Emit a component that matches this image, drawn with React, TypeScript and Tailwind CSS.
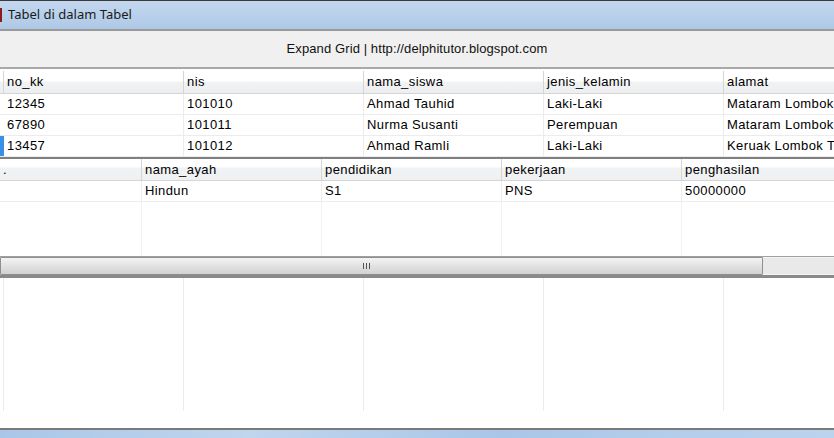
import React from "react";

// ===== Data =====
const masterCols = ["no_kk", "nis", "nama_siswa", "jenis_kelamin", "alamat"];
const masterRows = [
  ["12345", "101010", "Ahmad Tauhid", "Laki-Laki", "Mataram Lombok"],
  ["67890", "101011", "Nurma Susanti", "Perempuan", "Mataram Lombok"],
  ["13457", "101012", "Ahmad Ramli", "Laki-Laki", "Keruak Lombok Timur"],
];
const detailCols = ["nama_ayah", "pendidikan", "pekerjaan", "penghasilan"];
const detailRows = [["Hindun", "S1", "PNS", "50000000"]];

const font = "font-['Liberation_Sans',Arial,sans-serif]";

function HeaderCell({ text, w }: { text: string; w: string }) {
  return (
    <div
      className={`${w} shrink-0 h-full border-r border-[#d5d5d5] pl-[3px] flex items-center whitespace-nowrap overflow-hidden`}
    >
      {text}
    </div>
  );
}

function Cell({ text, w }: { text: string; w: string }) {
  return (
    <div
      className={`${w} shrink-0 h-full border-r border-[#ececec] pl-[3px] flex items-center whitespace-nowrap overflow-hidden`}
    >
      {text}
    </div>
  );
}

export default function App() {
  return (
    <div
      className={`w-[834px] h-[438px] overflow-hidden bg-white flex flex-col text-[13px] tracking-[0.4px] text-black ${font}`}
    >
      {/* window title */}
      <div className="h-[29px] shrink-0 border-t border-[#3a3a3a] bg-[linear-gradient(to_bottom,#c3d7ee,#b7cfea_60%,#aec8e6)] flex items-center">
        <div className="w-[2px] h-[14px] bg-[#8a1c1c] mr-[6px]" />
        <span className="font-['Noto_Sans',sans-serif] text-[13px] tracking-normal text-[#1a1a1a]">
          Tabel di dalam Tabel
        </span>
      </div>

      {/* top panel */}
      <div className="h-[40px] shrink-0 border-t-2 border-[#9a9a9a] border-b-2 border-b-[#a8a8a8] bg-[#f0f0f0] flex items-center justify-center text-[13px] tracking-[0.1px] text-[#111]">
        Expand Grid | http://delphitutor.blogspot.com
      </div>

      {/* master grid */}
      <div className="flex flex-col flex-1 overflow-hidden">
        <div className="h-[25px] shrink-0 flex pt-[2px] bg-[linear-gradient(to_bottom,#ffffff_50%,#f1f2f4_55%,#eceef0)] border-b border-[#d5d5d5]">
          <div className="w-[4px] shrink-0 h-full border-r border-[#d5d5d5]" />
          {masterCols.map((c) => (
            <HeaderCell key={c} text={c} w="w-[180px]" />
          ))}
        </div>
        {masterRows.map((r, i) => (
          <div
            key={i}
            className="h-[21px] shrink-0 flex border-b border-[#ececec] last:border-b-0"
          >
            <div
              className={`w-[4px] shrink-0 h-full ${i === 2 ? "bg-[#3b8fe4]" : ""}`}
            />
            {r.map((v, j) => (
              <Cell key={j} text={v} w="w-[180px]" />
            ))}
          </div>
        ))}

        {/* detail grid */}
        <div className="shrink-0 border-t-2 border-[#808080] flex flex-col">
          <div className="h-[22px] flex bg-[linear-gradient(to_bottom,#ffffff_35%,#f1f2f4_45%,#eef0f2)] border-b border-[#d5d5d5]">
            <HeaderCell text="." w="w-[142px]" />
            {detailCols.map((c) => (
              <HeaderCell key={c} text={c} w="w-[180px]" />
            ))}
          </div>
          {detailRows.map((r, i) => (
            <div key={i} className="h-[21px] flex border-b border-[#ececec]">
              <Cell text="" w="w-[142px]" />
              {r.map((v, j) => (
                <Cell key={j} text={v} w="w-[180px]" />
              ))}
            </div>
          ))}
          <div className="h-[54px] flex">
            <div className="w-[142px] shrink-0 border-r border-[#f2f2f2]" />
            {detailCols.map((c) => (
              <div key={c} className="w-[180px] shrink-0 border-r border-[#f2f2f2]" />
            ))}
          </div>

          {/* horizontal scrollbar */}
          <div className="h-[19px] flex border-t border-[#a0a0a0] bg-[#e9e9e9]">
            <div className="w-[763px] shrink-0 h-full border border-[#8f8f8f] rounded-[1px] bg-[linear-gradient(to_bottom,#f4f4f4,#e2e2e2_50%,#d2d2d2)] flex items-center pl-[362px]">
              <div className="flex gap-[2px]">
                <div className="w-[1px] h-[6px] bg-[#555]" />
                <div className="w-[1px] h-[6px] bg-[#555]" />
                <div className="w-[1px] h-[6px] bg-[#555]" />
              </div>
            </div>
            <div className="flex-1 border-y border-[#f4f4f4]" />
          </div>
        </div>

        {/* rest of master grid */}
        <div className="flex-1 flex flex-col border-t-[3px] border-[#8a8a8a]">
          <div className="flex h-[133px]">
            <div className="w-[4px] shrink-0 border-r border-[#ececec]" />
            {masterCols.map((c) => (
              <div key={c} className="w-[180px] shrink-0 border-r border-[#ececec]" />
            ))}
          </div>
        </div>
      </div>

      {/* bottom edge */}
      <div className="h-[10px] shrink-0 border-t-2 border-[#7a7a7a] bg-[linear-gradient(to_right,#a9c6e8,#c0d5ee_30%,#a9c6e8_60%,#bcd3ee)]" />
    </div>
  );
}
